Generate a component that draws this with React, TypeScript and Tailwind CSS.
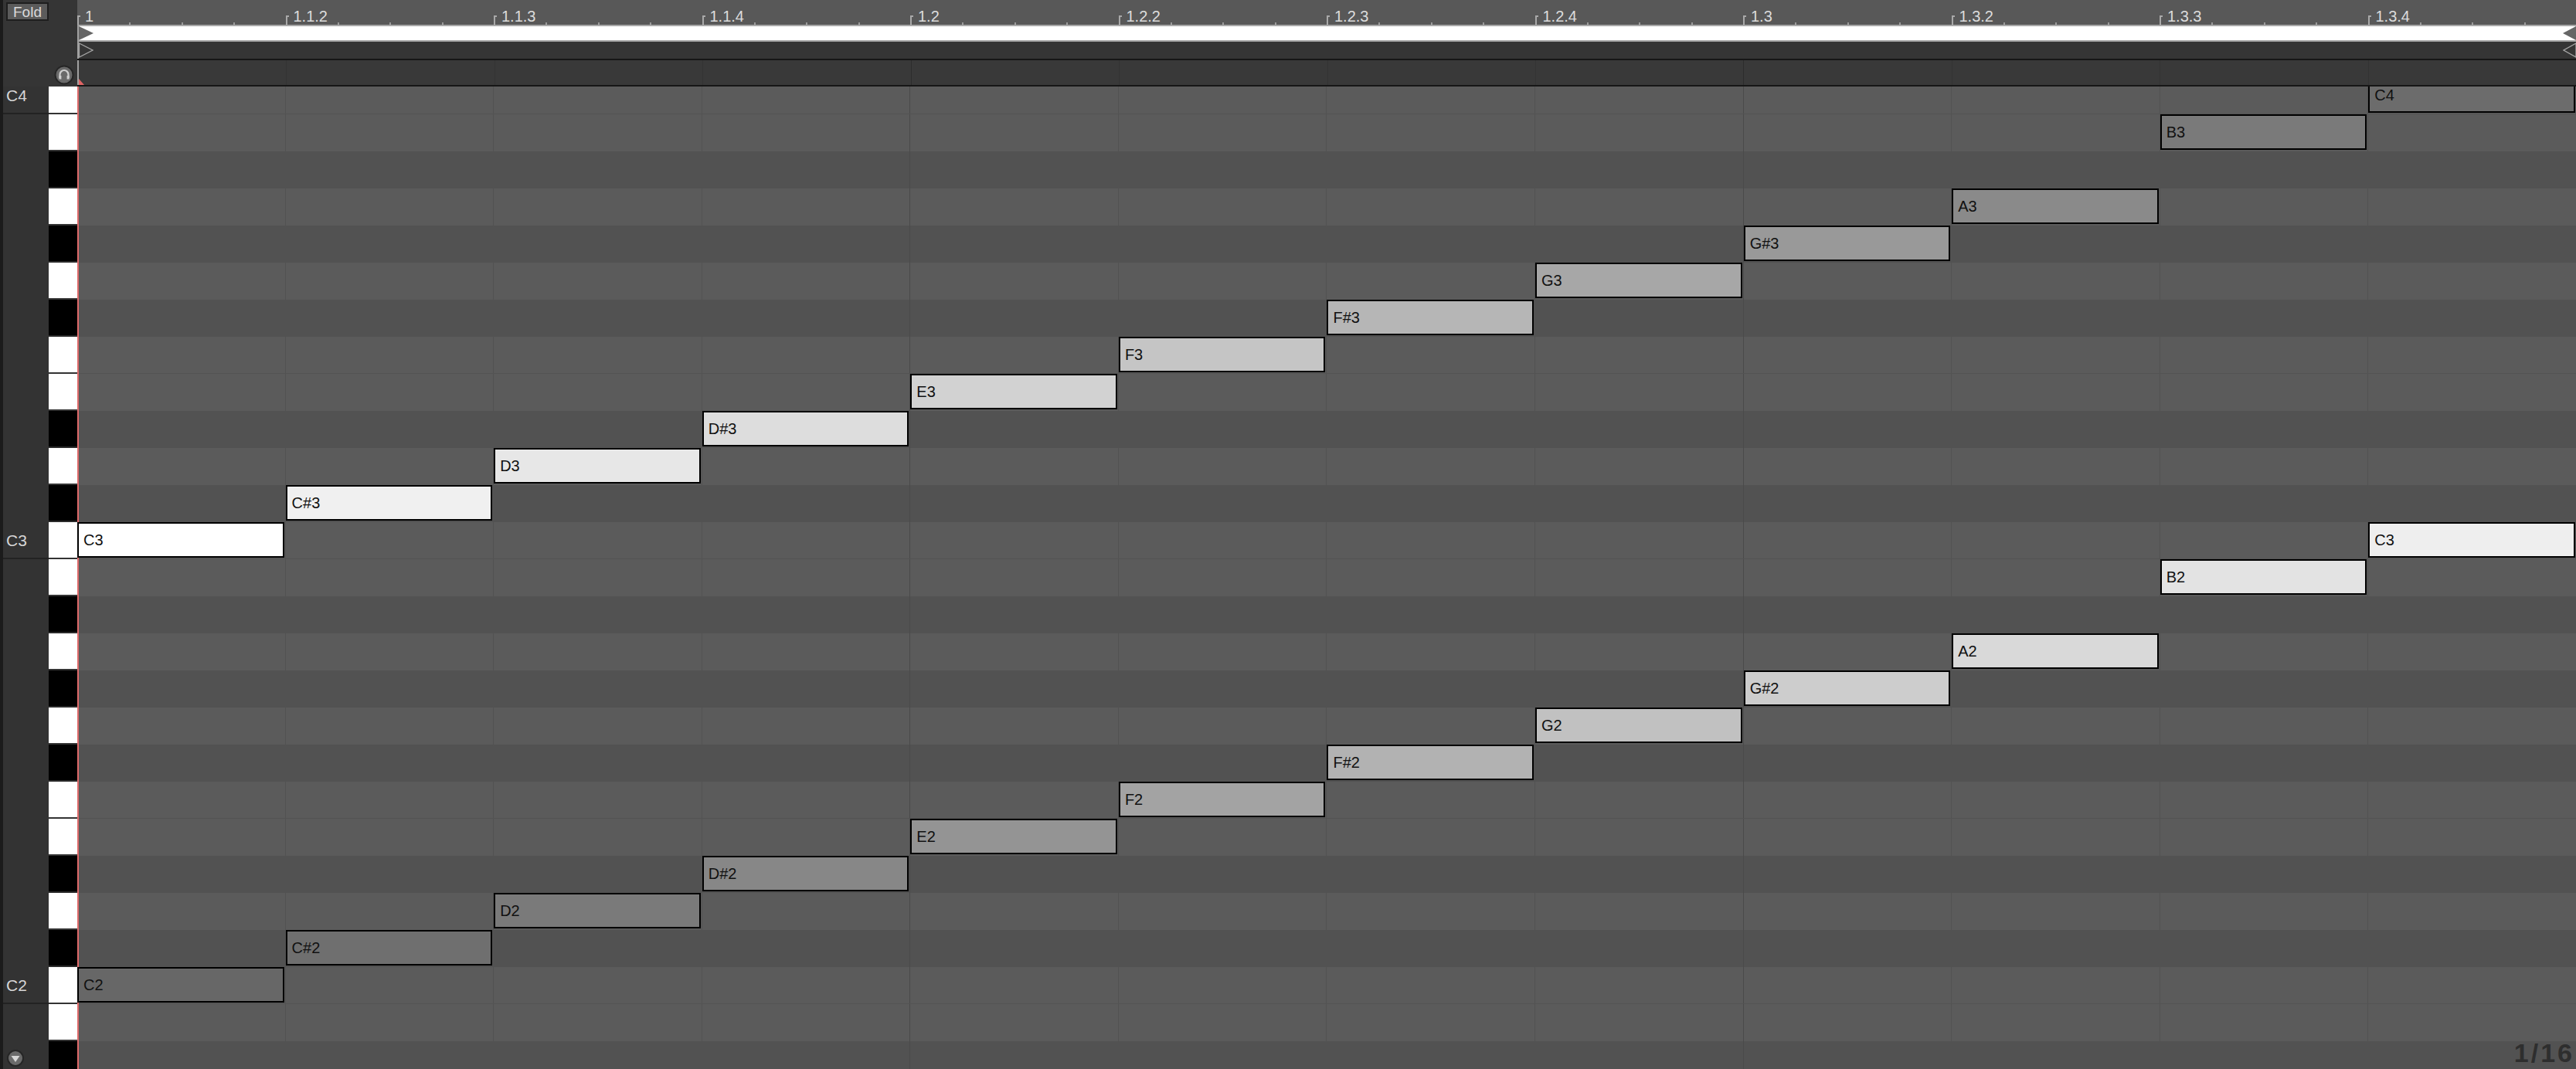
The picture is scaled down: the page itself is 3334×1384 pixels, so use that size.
import React from "react";

const NAMES = ["C", "C#", "D", "D#", "E", "F", "F#", "G", "G#", "A", "A#", "B"];
const RULER = ["1", "1.1.2", "1.1.3", "1.1.4", "1.2", "1.2.2", "1.2.3", "1.2.4", "1.3", "1.3.2", "1.3.3", "1.3.4"];

// 27 visible pitch rows, C4 at the top (partly under the header)
const rows = Array.from({ length: 27 }, (_, i) => {
  const midi = 72 - i;
  const name = NAMES[midi % 12] + (Math.floor(midi / 12) - 2);
  return { name, black: name.includes("#"), pitch: NAMES[midi % 12] };
});

interface Note {
  row: number;
  col: number;
  bg: string;
}

const notes: Note[] = [
  { row: 12, col: 0, bg: "bg-[#ffffff]" },
  { row: 11, col: 1, bg: "bg-[#f0f0f0]" },
  { row: 10, col: 2, bg: "bg-[#e7e7e7]" },
  { row: 9, col: 3, bg: "bg-[#dddddd]" },
  { row: 8, col: 4, bg: "bg-[#d2d2d2]" },
  { row: 7, col: 5, bg: "bg-[#c5c5c5]" },
  { row: 6, col: 6, bg: "bg-[#b6b6b6]" },
  { row: 5, col: 7, bg: "bg-[#a7a7a7]" },
  { row: 4, col: 8, bg: "bg-[#999999]" },
  { row: 3, col: 9, bg: "bg-[#8a8a8a]" },
  { row: 1, col: 10, bg: "bg-[#7a7a7a]" },
  { row: 0, col: 11, bg: "bg-[#6c6c6c]" },
  { row: 24, col: 0, bg: "bg-[#676767]" },
  { row: 23, col: 1, bg: "bg-[#6f6f6f]" },
  { row: 22, col: 2, bg: "bg-[#7a7a7a]" },
  { row: 21, col: 3, bg: "bg-[#878787]" },
  { row: 20, col: 4, bg: "bg-[#949494]" },
  { row: 19, col: 5, bg: "bg-[#a3a3a3]" },
  { row: 18, col: 6, bg: "bg-[#b2b2b2]" },
  { row: 17, col: 7, bg: "bg-[#c1c1c1]" },
  { row: 16, col: 8, bg: "bg-[#cdcdcd]" },
  { row: 15, col: 9, bg: "bg-[#d9d9d9]" },
  { row: 13, col: 10, bg: "bg-[#e3e3e3]" },
  { row: 12, col: 11, bg: "bg-[#eeeeee]" },
];

const cols = Array.from({ length: 12 }, (_, i) => i);

function colLine(c: number, beat: string, step: string) {
  if (c === 0) return "";
  return c % 4 === 0 ? `border-l ${beat}` : `border-l ${step}`;
}

function HeadphoneButton() {
  return (
    <svg width="26" height="26" viewBox="0 0 26 26">
      <circle cx="13" cy="13" r="11.5" fill="#6a6a6a" stroke="#262626" strokeWidth="2" />
      <path d="M7.5 17 V12.5 a5.5 5.5 0 0 1 11 0 V17" fill="none" stroke="#cfcfcf" strokeWidth="2.2" />
      <rect x="6.4" y="14" width="3" height="4.5" fill="#cfcfcf" />
      <rect x="16.6" y="14" width="3" height="4.5" fill="#cfcfcf" />
    </svg>
  );
}

function Ruler() {
  return (
    <div className="flex h-[32px] bg-[#585858]">
      {cols.map((c) => (
        <div key={c} className="relative flex flex-1 min-w-0 items-end">
          <div className="h-[12px] w-[4px] border-l-2 border-t-2 border-[#a9a9a9]" />
          <span className="mb-[1px] ml-[6px] text-[20px] leading-none text-[#dcdcdc]">{RULER[c]}</span>
          <div className="absolute bottom-0 left-1/4 h-[3px] w-[2px] bg-[#9a9a9a]" />
          <div className="absolute bottom-0 left-1/2 h-[3px] w-[2px] bg-[#9a9a9a]" />
          <div className="absolute bottom-0 left-3/4 h-[3px] w-[2px] bg-[#9a9a9a]" />
        </div>
      ))}
    </div>
  );
}

export default function App() {
  return (
    <div className="flex h-[1384px] w-[3334px] overflow-hidden bg-[#333333] font-['Liberation_Sans',Arial,sans-serif]">
      <div className="h-full w-[4px] bg-[#1b1b1b]" />

      <div className="flex min-w-0 flex-1 flex-col">
        {/* header */}
        <div className="flex h-[112px]">
          <div className="flex w-[96px] flex-col justify-between bg-[#353535]">
            <div className="ml-[4px] mt-[3px] flex h-[24px] w-[55px] items-center justify-center border-2 border-[#1e1e1e] bg-[#5b5b5b] text-[19px] leading-none text-[#dadada]">
              Fold
            </div>
            <div className="mb-[2px] mr-[4px] self-end">
              <HeadphoneButton />
            </div>
          </div>

          <div className="flex min-w-0 flex-1 flex-col">
            <Ruler />

            <div className="flex h-[22px] border-l-2 border-[#a0a0a0]">
              <div className="flex flex-1 items-center justify-between border-y-2 border-[#a8a8a8] bg-white">
                <svg width="19" height="18" viewBox="0 0 19 18">
                  <polygon points="0,0 19,9 0,18" fill="#666666" />
                </svg>
                <svg width="17" height="18" viewBox="0 0 17 18">
                  <polygon points="17,0 0,9 17,18" fill="#666666" />
                </svg>
              </div>
            </div>

            <div className="flex h-[22px] items-center justify-between border-l-2 border-[#a0a0a0] bg-[#353535]">
              <svg width="19" height="20" viewBox="0 0 19 20">
                <polygon points="0.5,1 18,10 0.5,19" fill="none" stroke="#a5a5a5" strokeWidth="1.3" />
              </svg>
              <svg width="17" height="20" viewBox="0 0 17 20">
                <polygon points="17,1 1,10 17,19" fill="none" stroke="#a5a5a5" strokeWidth="1.3" />
              </svg>
            </div>

            <div className="h-[2px] bg-[#161616]" />

            <div className="relative flex h-[32px] border-l-2 border-[#a0a0a0] bg-[#393939]">
              {cols.map((c) => (
                <div key={c} className={`flex-1 min-w-0 ${colLine(c, "border-[#2c2c2c]", "border-[#333333]")}`} />
              ))}
              <svg className="absolute bottom-0 left-0" width="8" height="8" viewBox="0 0 8 8">
                <polygon points="0,8 7,0 0,0" fill="#e06464" transform="scale(1,-1) translate(0,-8)" />
              </svg>
            </div>

            <div className="h-[2px] bg-[#161616]" />
          </div>
        </div>

        {/* body */}
        <div className="flex h-[1272px] overflow-hidden">
          <div className="relative w-[59px] bg-[#333333]">
            <div className="-mt-[12px]">
              {rows.map((r, i) => (
                <div
                  key={i}
                  className={`flex h-[48px] items-center pl-[4px] text-[21px] leading-none text-[#d6d6d6] ${r.pitch === "C" ? "border-b-2 border-[#222222]" : ""}`}
                >
                  {r.pitch === "C" ? r.name : ""}
                </div>
              ))}
            </div>
            <svg className="absolute bottom-[3px] left-[5px]" width="22" height="22" viewBox="0 0 22 22">
              <circle cx="11" cy="11" r="10" fill="#6a6a6a" stroke="#262626" strokeWidth="2" />
              <polygon points="5.5,8 16.5,8 11,16" fill="#d6d6d6" />
            </svg>
          </div>

          <div className="w-[37px]">
            <div className="-mt-[12px]">
              {rows.map((r, i) => (
                <div
                  key={i}
                  className={`h-[48px] border-b-2 ${r.black ? "border-[#2a2a2a] bg-black" : "border-[#333333] bg-white"}`}
                />
              ))}
            </div>
          </div>

          <div className="relative min-w-0 flex-1">
            <div className="absolute bottom-0 left-0 top-0 w-[2px] bg-[#df6b6b]" />
            <div className="-mt-[12px]">
              {rows.map((r, i) => (
                <div
                  key={i}
                  className={`flex h-[48px] ${r.black ? "bg-[#525252]" : "bg-[#5b5b5b]"} ${r.pitch === "C" || r.pitch === "F" ? "border-b border-[#535353]" : ""}`}
                >
                  {cols.map((c) => {
                    const n = notes.find((x) => x.row === i && x.col === c);
                    return (
                      <div key={c} className={`min-w-0 flex-1 ${colLine(c, "border-[#4a4a4a]", "border-[#525252]")}`}>
                        {n && (
                          <div
                            className={`relative z-10 mr-[1px] flex h-[46px] items-center border-2 border-black pl-[6px] text-[20px] leading-none text-[#111111] ${n.bg}`}
                          >
                            {r.name}
                          </div>
                        )}
                      </div>
                    );
                  })}
                </div>
              ))}
            </div>
            <div className="absolute bottom-[4px] right-[2px] z-20 text-[34px] font-bold leading-none tracking-[3px] text-[#2e2e2e]">
              1/16
            </div>
          </div>
        </div>
      </div>
    </div>
  );
}
